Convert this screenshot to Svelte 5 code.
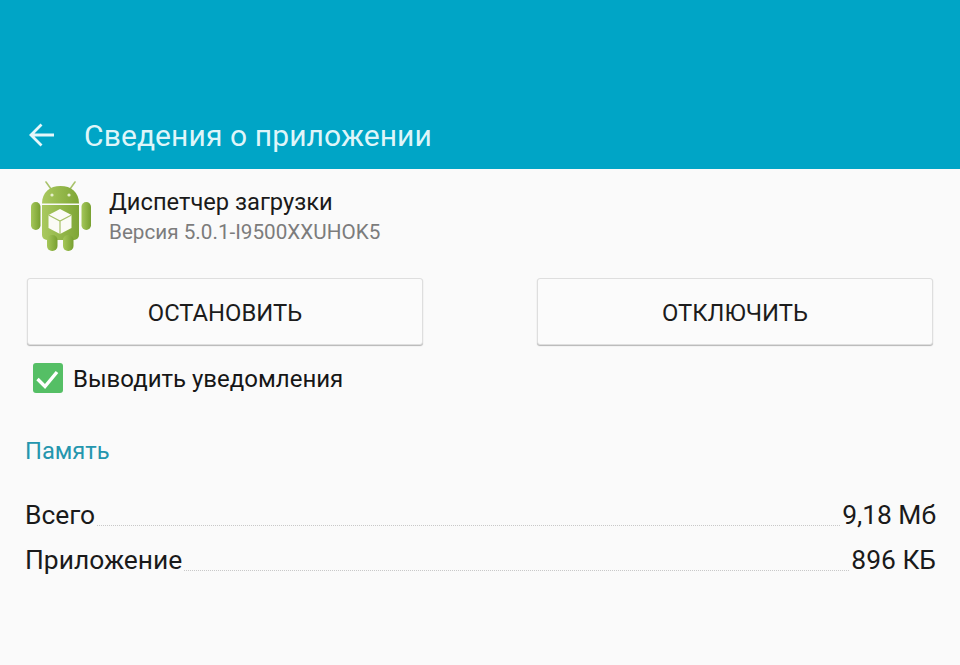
<script>
  const rows = [
    { label: 'Всего', value: '9,18 Мб' },
    { label: 'Приложение', value: '896 КБ' }
  ];
</script>

<div class="page">
  <header class="bar">
    <svg class="back" viewBox="0 0 26 24" width="26" height="24" aria-hidden="true">
      <path d="M25 12H2M12.500 1.500 2 12l10.500 10.500" fill="none" stroke="#e6f7fa" stroke-width="2.800" />
    </svg>
    <h1>Сведения о приложении</h1>
  </header>

  <main class="content">
    <section class="app">
      <svg class="robot" viewBox="0 0 62 72" width="62" height="72" aria-hidden="true">
        <defs>
          <linearGradient id="g" x1="0" y1="0" x2="1" y2="0">
            <stop offset="0" stop-color="#a9c95f" />
            <stop offset="1" stop-color="#7fa636" />
          </linearGradient>
          <linearGradient id="g2" x1="0" y1="0" x2="1" y2="0">
            <stop offset="0" stop-color="#a5c75a" />
            <stop offset="1" stop-color="#78a031" />
          </linearGradient>
        </defs>
        <path d="M16 1l5 7M45 1l-5 7" stroke="#a9c36c" stroke-width="1.600" stroke-linecap="round" />
        <path d="M12 22.500C12 11 20 5 30.500 5S49 11 49 22.500z" fill="url(#g)" />
        <circle cx="22" cy="14" r="1.600" fill="#e6efcb" />
        <circle cx="39" cy="14" r="1.600" fill="#e6efcb" />
        <rect x="1" y="21" width="9.500" height="28" rx="4.700" fill="url(#g2)" />
        <rect x="51.500" y="21" width="9.500" height="28" rx="4.700" fill="url(#g2)" />
        <path d="M12 24h37v30a5 5 0 0 1-5 5H17a5 5 0 0 1-5-5z" fill="url(#g)" />
        <rect x="17" y="54" width="10.500" height="16" rx="5" fill="url(#g2)" />
        <rect x="33" y="54" width="10.500" height="16" rx="5" fill="url(#g2)" />
        <path d="M30 28l11.500 6v13L30 53l-11.500-6V34z" fill="#fbfbf6" />
        <path d="M18.500 34L30 40l11.500-6M30 40v13" fill="none" stroke="#a7c268" stroke-width="1.200" />
      </svg>
      <div class="app-text">
        <div class="app-name">Диспетчер загрузки</div>
        <div class="app-version">Версия 5.0.1-I9500XXUHOK5</div>
      </div>
    </section>

    <section class="buttons">
      <button type="button">ОСТАНОВИТЬ</button>
      <button type="button">ОТКЛЮЧИТЬ</button>
    </section>

    <label class="check">
      <span class="box">
        <svg viewBox="0 0 30 30" width="30" height="30" aria-hidden="true">
          <path d="M4.500 16l7.500 7.500L24 9" fill="none" stroke="#fff" stroke-width="3.400" />
        </svg>
      </span>
      <span class="check-label">Выводить уведомления</span>
    </label>

    <h2>Память</h2>

    <div class="rows">
      {#each rows as row}
        <div class="row">
          <span>{row.label}</span>
          <i class="dots"></i>
          <span>{row.value}</span>
        </div>
      {/each}
    </div>
  </main>
</div>

<style>
  :global(body) {
    margin: 0;
    background: #fafafa;
    font-family: Roboto, "Noto Sans", sans-serif;
  }
  .page {
    height: 665px;
    overflow: hidden;
    background: #fafafa;
  }
  .bar {
    height: 169px;
    box-sizing: border-box;
    background: #00a5c6;
    display: flex;
    align-items: flex-end;
    padding: 0 0 13px 29px;
    gap: 29px;
  }
  .back {
    margin-bottom: 9px;
    flex: none;
  }
  h1 {
    margin: 0;
    font-size: 30px;
    line-height: 40px;
    font-weight: 400;
    color: #dff5f9;
    letter-spacing: 0.1px;
  }
  .content {
    padding: 0 24px 0 25px;
  }
  .app {
    display: flex;
    align-items: flex-start;
    padding: 12px 0 0 5px;
    height: 98px;
    box-sizing: border-box;
    gap: 17px;
  }
  .app-text {
    padding-top: 6px;
  }
  .app-name {
    font-size: 23.700px;
    line-height: 30px;
    color: #1a1a1a;
  }
  .app-version {
    font-size: 20.700px;
    line-height: 30px;
    color: #7c7c7c;
  }
  .buttons {
    display: flex;
    justify-content: space-between;
    padding-left: 2px;
    margin-right: 3px;
    margin-top: 11px;
  }
  button {
    width: 396px;
    height: 67px;
    box-sizing: border-box;
    padding: 2px 0 0;
    background: #fbfbfb;
    border: 1px solid #dedede;
    border-radius: 3px;
    box-shadow: 0 1px 1px #b5b5b5;
    font: 400 23.800px Roboto, sans-serif;
    color: #1c1c1c;
  }
  .check {
    display: flex;
    align-items: center;
    margin: 17px 0 0 8px;
    gap: 10px;
    font-size: 24px;
    line-height: 30px;
    color: #161616;
  }
  .check-label {
    padding-top: 2px;
  }
  .box {
    width: 30px;
    height: 30px;
    border-radius: 3px;
    background: #55bf65;
    display: block;
  }
  .box svg {
    display: block;
  }
  h2 {
    margin: 42px 0 0;
    font-size: 23.700px;
    line-height: 30px;
    font-weight: 400;
    color: #2596ae;
  }
  .rows {
    margin-top: 27px;
  }
  .row {
    display: flex;
    align-items: flex-start;
    height: 45px;
    font-size: 26.400px;
    line-height: 45px;
    color: #1a1a1a;
  }
  .dots {
    flex: 1;
    height: 32px;
    border-bottom: 1px dotted #c8c8c8;
    margin: 0 2px;
  }
</style>
